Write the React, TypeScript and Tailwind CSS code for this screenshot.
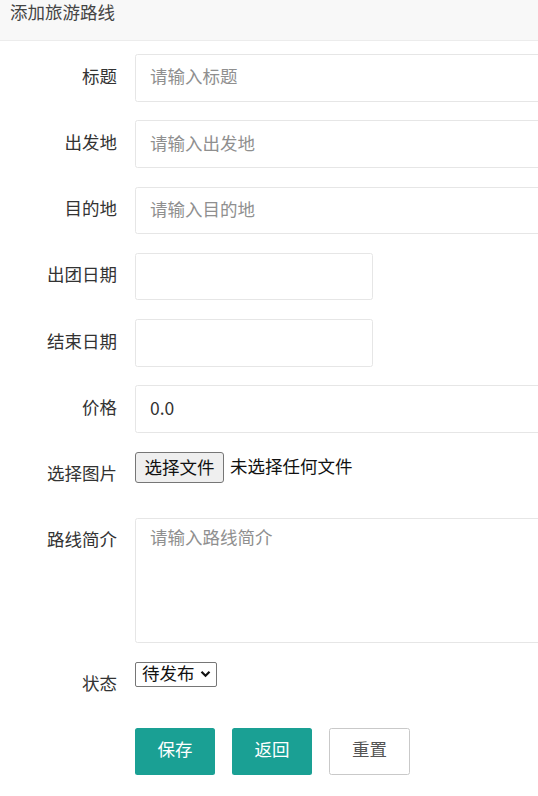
import React from 'react';

const font = { fontFamily: '"Noto Sans CJK SC", "Noto Sans", sans-serif' };

function Row({ label, children }: { label: string; children: React.ReactNode }) {
  return (
    <div className="flex items-start mb-[18.75px]">
      <label className="w-[135px] shrink-0 pt-[8.5px] pb-[14px] pr-[18px] text-right text-[17.5px] leading-[25px] text-[#333]">
        {label}
      </label>
      <div className="flex-1">{children}</div>
    </div>
  );
}

function TextInput({ placeholder, value, width }: { placeholder?: string; value?: string; width?: string }) {
  return (
    <input
      className={`${width ?? 'w-[440px]'} h-[47.5px] border border-[#e6e6e6] rounded-[2.5px] bg-white pl-[14px] pb-[4px] text-[17.5px] text-[#333] placeholder:text-[#8f8f8f] outline-none`}
      placeholder={placeholder}
      defaultValue={value}
    />
  );
}

export default function App() {
  return (
    <div className="w-[538px] min-h-[796px] overflow-hidden bg-white" style={font}>
      <div className="h-[41px] bg-[#f8f8f8] border-b border-[#ececec] pl-[10px] pt-[1px]">
        <span className="block text-[17.5px] leading-[21px] text-[#444]">添加旅游路线</span>
      </div>

      <form className="pt-[13px]">
        <Row label="标题">
          <TextInput placeholder="请输入标题" />
        </Row>
        <Row label="出发地">
          <TextInput placeholder="请输入出发地" />
        </Row>
        <Row label="目的地">
          <TextInput placeholder="请输入目的地" />
        </Row>
        <Row label="出团日期">
          <TextInput width="w-[237.5px]" />
        </Row>
        <Row label="结束日期">
          <TextInput width="w-[237.5px]" />
        </Row>
        <Row label="价格">
          <TextInput value="0.0" />
        </Row>
        <Row label="选择图片">
          <div className="flex items-center h-[31px] text-[17.5px] text-[#111]">
            <button
              type="button"
              className="h-[31px] w-[89px] border border-[#767676] rounded-[3px] bg-[#efefef] pb-[2px] text-[17.5px] leading-[25px] text-[#111]"
            >
              选择文件
            </button>
            <span className="ml-[6px] pb-[2px]">未选择任何文件</span>
          </div>
        </Row>
        <Row label="路线简介">
          <textarea
            className="block w-[440px] h-[125px] resize-none border border-[#e6e6e6] rounded-[2.5px] bg-white pl-[14px] pt-[5px] text-[17.5px] leading-[25px] text-[#333] placeholder:text-[#8f8f8f] outline-none"
            placeholder="请输入路线简介"
          />
        </Row>
        <Row label="状态">
          <div className="flex items-center w-[82px] h-[25px] border border-[#767676] rounded-[2px] pl-[6px] pr-[5px] text-[17.5px] leading-[23px] text-[#111]">
            <span className="flex-1 pb-[3px]">待发布</span>
            <svg width="11" height="8" viewBox="0 0 11 8" fill="none">
              <path d="M1.5 1.8 L5.5 5.8 L9.5 1.8" stroke="#111" strokeWidth="2.2" />
            </svg>
          </div>
        </Row>
        <div className="flex items-center gap-[17px] pl-[135px]">
          <button
            type="button"
            className="w-[80px] h-[47.5px] rounded-[2.5px] bg-[#1aa094] pb-[4px] text-white text-[17.5px]"
          >
            保存
          </button>
          <button
            type="button"
            className="w-[80px] h-[47.5px] rounded-[2.5px] bg-[#1aa094] pb-[4px] text-white text-[17.5px]"
          >
            返回
          </button>
          <button
            type="button"
            className="w-[81px] h-[47.5px] rounded-[2.5px] border border-[#c9c9c9] bg-white pb-[4px] text-[#555] text-[17.5px]"
          >
            重置
          </button>
        </div>
      </form>
    </div>
  );
}
